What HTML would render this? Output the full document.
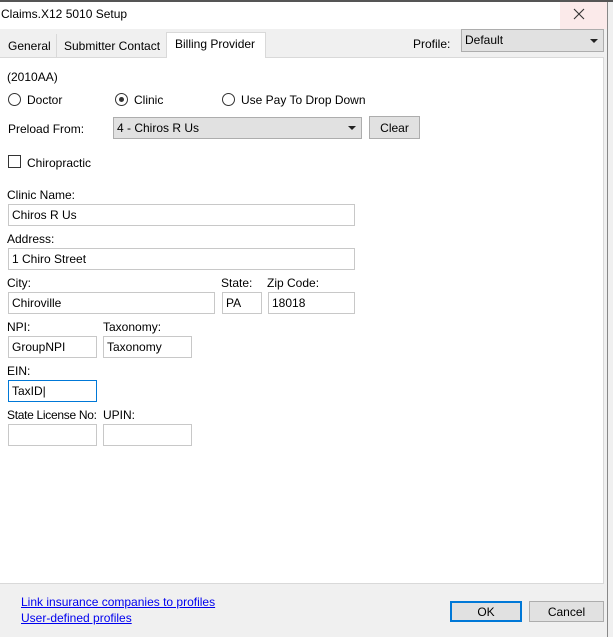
<!DOCTYPE html>
<html><head><meta charset="utf-8"><style>
*{margin:0;padding:0;box-sizing:border-box}
body{width:613px;height:637px;overflow:hidden;background:#f0f0f0;font-family:"Liberation Sans",sans-serif;font-size:12px;color:#000;position:relative}
.a{position:absolute;white-space:nowrap}
.in{position:absolute;background:#fff;border:1px solid #c8c8c8;padding:3px 0 0 3px;height:22px}
.rad{position:absolute;width:13px;height:13px;border:1px solid #333;border-radius:50%;background:#fff}
.btn{position:absolute;background:#e1e1e1;border:1px solid #adadad;text-align:center}
.arr{position:absolute;right:5px;top:50%;margin-top:-2px;width:0;height:0;border-left:4px solid transparent;border-right:4px solid transparent;border-top:4px solid #222}
a{color:#0000ee;text-decoration:underline}
</style></head><body>
<div class="a" style="left:0;top:0;width:607px;height:29px;background:#fff"></div>
<div class="a" style="left:0;top:0;width:613px;height:2px;background:#555"></div>
<div class="a" style="left:607px;top:2px;width:1px;height:635px;background:#888"></div>
<div class="a" style="left:1px;top:7px;font-size:12px">Claims.X12 5010 Setup</div>
<div class="a" style="left:560px;top:2px;width:47px;height:27px;background:#fbeaea"></div>
<svg class="a" style="left:573px;top:8px" width="12" height="12"><path d="M1 1L11 11M11 1L1 11" stroke="#333" stroke-width="1.1"/></svg>
<div class="a" style="left:0;top:57px;width:604px;height:1px;background:#d9d9d9"></div>
<div class="a" style="left:0;top:34px;width:57px;height:24px;border-right:1px solid #d9d9d9"></div>
<div class="a" style="left:8px;top:39px">General</div>
<div class="a" style="left:64px;top:39px">Submitter Contact</div>
<div class="a" style="left:166px;top:32px;width:100px;height:27px;background:#fff;border:1px solid #d9d9d9;border-bottom:none"></div>
<div class="a" style="left:175px;top:37px">Billing Provider</div>
<div class="a" style="left:413px;top:37px">Profile:</div>
<div class="btn" style="left:461px;top:29px;width:143px;height:23px;text-align:left;padding:3px 0 0 3px">Default<span class="arr"></span></div>
<div class="a" style="left:0;top:58px;width:604px;height:526px;background:#fff;border-right:1px solid #d9d9d9;border-bottom:1px solid #d9d9d9"></div>
<div class="a" style="left:7px;top:70px">(2010AA)</div>
<div class="rad" style="left:8px;top:93px"></div><div class="a" style="left:27px;top:93px">Doctor</div>
<div class="rad" style="left:115px;top:93px"></div><div class="a" style="left:119px;top:97px;width:5px;height:5px;border-radius:50%;background:#333"></div><div class="a" style="left:134px;top:93px">Clinic</div>
<div class="rad" style="left:222px;top:93px"></div><div class="a" style="left:241px;top:93px">Use Pay To Drop Down</div>
<div class="a" style="left:8px;top:122px">Preload From:</div>
<div class="btn" style="left:113px;top:117px;width:249px;height:22px;text-align:left;padding:3px 0 0 3px">4 - Chiros R Us<span class="arr"></span></div>
<div class="btn" style="left:369px;top:116px;width:51px;height:23px;padding-top:4px">Clear</div>
<div class="a" style="left:8px;top:155px;width:13px;height:13px;border:1px solid #333"></div>
<div class="a" style="left:27px;top:156px">Chiropractic</div>
<div class="a" style="left:7px;top:188px">Clinic Name:</div>
<div class="in" style="left:8px;top:204px;width:347px">Chiros R Us</div>
<div class="a" style="left:7px;top:232px">Address:</div>
<div class="in" style="left:8px;top:248px;width:347px">1 Chiro Street</div>
<div class="a" style="left:7px;top:276px">City:</div>
<div class="a" style="left:221px;top:276px">State:</div>
<div class="a" style="left:267px;top:276px">Zip Code:</div>
<div class="in" style="left:8px;top:292px;width:207px">Chiroville</div>
<div class="in" style="left:222px;top:292px;width:40px">PA</div>
<div class="in" style="left:268px;top:292px;width:87px">18018</div>
<div class="a" style="left:7px;top:320px">NPI:</div>
<div class="a" style="left:103px;top:320px">Taxonomy:</div>
<div class="in" style="left:8px;top:336px;width:89px">GroupNPI</div>
<div class="in" style="left:103px;top:336px;width:89px">Taxonomy</div>
<div class="a" style="left:7px;top:364px">EIN:</div>
<div class="in" style="left:8px;top:380px;width:89px;border-color:#0078d7">TaxID|</div>
<div class="a" style="left:7px;top:408px;letter-spacing:-0.3px">State License No:</div>
<div class="a" style="left:103px;top:408px">UPIN:</div>
<div class="in" style="left:8px;top:424px;width:89px"></div>
<div class="in" style="left:103px;top:424px;width:89px"></div>
<div class="a" style="left:21px;top:595px"><a>Link insurance companies to profiles</a></div>
<div class="a" style="left:21px;top:611px"><a>User-defined profiles</a></div>
<div class="btn" style="left:450px;top:601px;width:72px;height:21px;border:2px solid #0078d7;padding-top:2px">OK</div>
<div class="btn" style="left:529px;top:601px;width:75px;height:21px;padding-top:3px">Cancel</div>
</body></html>
